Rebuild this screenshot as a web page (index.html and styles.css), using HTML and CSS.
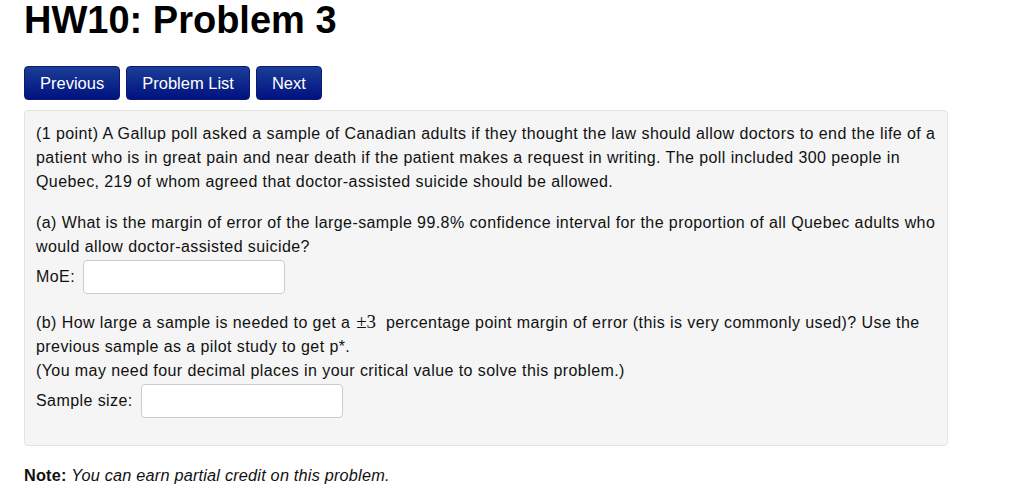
FILE: index.html
```html
<!DOCTYPE html>
<html lang="en">
<head>
    <meta charset="UTF-8">
    <meta name="viewport" content="width=device-width, initial-scale=1.0">
    <title>HW10: Problem 3</title>
    <link rel="stylesheet" href="styles.css">
</head>
<body>

    <div id="content">

        <h1 class="title">HW10: Problem 3</h1>

        <div class="nav">
            <a class="btn" href="#">Previous</a>
            <a class="btn" href="#">Problem List</a>
            <a class="btn" href="#">Next</a>
        </div>

        <div class="problem">
            <p>(1 point) A Gallup poll asked a sample of Canadian adults if they thought the law should allow doctors to end the life of a patient who is in great pain and near death if the patient makes a request in writing. The poll included 300 people in Quebec, 219 of whom agreed that doctor-assisted suicide should be allowed.</p>

            <p>(a) What is the margin of error of the large-sample 99.8% confidence interval for the proportion of all Quebec adults who would allow doctor-assisted suicide?<br>
            <label class="answer">MoE: <input class="field" type="text" id="moe"></label></p>

            <p>(b) How large a sample is needed to get a <span class="math">&plusmn;3</span> percentage point margin of error (this is very commonly used)? Use the previous sample as a pilot study to get p*.<br>
            (You may need four decimal places in your critical value to solve this problem.)<br>
            <label class="answer">Sample size: <input class="field" type="text" id="size"></label></p>
        </div>

        <p class="note"><b>Note:</b> <i>You can earn partial credit on this problem.</i></p>

    </div>

</body>
</html>
```

FILE: styles.css
```css
body {
    margin: 0px;
    font-family: "Liberation Sans", Arial, sans-serif;
    color: #111111;
    background-color: #ffffff;
}

div#content {
    padding: 0px 24px;
    width: 924px;
}

.title {
    margin: 0px;
    font-size: 38px;
    line-height: 40px;
    font-weight: bold;
    color: #000000;
}

.nav {
    display: flex;
    gap: 6px;
    margin-top: 26px;
    margin-bottom: 10px;
}

.btn {
    display: block;
    height: 32px;
    line-height: 32px;
    padding: 0px 15px;
    border: 1px solid #0b1c6e;
    border-radius: 4px;
    background-image: linear-gradient(#1b3e97, #001180);
    color: #ffffff;
    font-size: 16.5px;
    text-decoration: none;
}

.problem {
    background-color: #f5f5f5;
    border: 1px solid #e3e3e3;
    border-radius: 4px;
    padding: 11px 0px 10px 11px;
    font-size: 16px;
    letter-spacing: 0.42px;
    line-height: 24px;
}

.problem p {
    margin: 0px 0px 17px 0px;
}

.answer {
    display: inline-flex;
    align-items: center;
    gap: 8px;
    margin-top: 1px;
}

.field {
    width: 188px;
    height: 20px;
    padding: 6px 6px;
    border: 1px solid #cccccc;
    border-radius: 4px;
    background-color: #ffffff;
    font-size: 15px;
}

.math {
    display: inline-block;
    font-family: "Liberation Serif", "Times New Roman", serif;
    font-size: 19px;
    line-height: 1;
    letter-spacing: 0px;
    margin-left: 1px;
    margin-right: 5px;
}

.note {
    margin-top: 20px;
    font-size: 16.3px;
    letter-spacing: 0.2px;
}
```
